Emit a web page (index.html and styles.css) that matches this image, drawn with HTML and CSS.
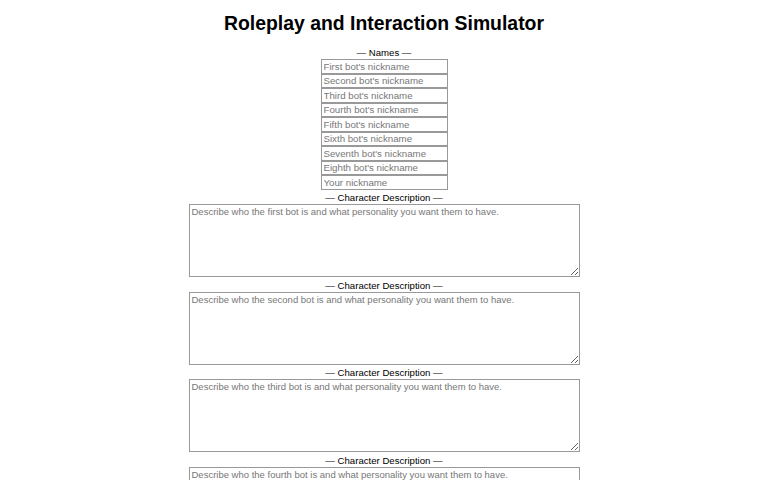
FILE: index.html
```html
<!DOCTYPE html>
<html>
<head>
    <title>Roleplay and Interaction Simulator</title>
    <link rel="stylesheet" href="styles.css">
</head>
<body>
    <h1>Roleplay and Interaction Simulator</h1>
    <div class="form">
        <div class="label">— Names —</div>
        <div class="names">
            <input type="text" placeholder="First bot's nickname">
            <input type="text" placeholder="Second bot's nickname">
            <input type="text" placeholder="Third bot's nickname">
            <input type="text" placeholder="Fourth bot's nickname">
            <input type="text" placeholder="Fifth bot's nickname">
            <input type="text" placeholder="Sixth bot's nickname">
            <input type="text" placeholder="Seventh bot's nickname">
            <input type="text" placeholder="Eighth bot's nickname">
            <input type="text" placeholder="Your nickname">
        </div>
        <div class="label first">— Character Description —</div>
        <textarea placeholder="Describe who the first bot is and what personality you want them to have."></textarea>
        <div class="label">— Character Description —</div>
        <textarea placeholder="Describe who the second bot is and what personality you want them to have."></textarea>
        <div class="label">— Character Description —</div>
        <textarea placeholder="Describe who the third bot is and what personality you want them to have."></textarea>
        <div class="label">— Character Description —</div>
        <textarea placeholder="Describe who the fourth bot is and what personality you want them to have."></textarea>
    </div>
</body>
</html>
```

FILE: styles.css
```css
body {
    font-family: 'Liberation Sans', Arial, sans-serif;
    font-size: 9.6px;
    margin: 0;
    padding: 0;
    color: #000;
    background-color: #fff;
}
h1 {
    font-size: 19.4px;
    text-align: center;
    margin: 11px 0 11.5px 0;
    line-height: 24px;
}
.form {
    display: flex;
    flex-direction: column;
    align-items: center;
}
.label {
    line-height: 12px;
    height: 12px;
}
.label.first {
    margin-top: 2.5px;
}
.names {
    display: flex;
    flex-direction: column;
    margin-top: 0.5px;
}
input[type="text"] {
    box-sizing: border-box;
    width: 127px;
    height: 14.5px;
    margin: 0;
    padding: 0 2px;
    border: 1px solid #999;
    font-family: 'Liberation Sans', Arial, sans-serif;
    font-size: 9.7px;
}
input::placeholder,
textarea::placeholder {
    color: #777;
}
textarea {
    box-sizing: border-box;
    width: 391px;
    height: 73px;
    margin: 0 0 2.5px 0;
    padding: 1px 2px;
    border: 1px solid #999;
    font-family: 'Liberation Sans', Arial, sans-serif;
    font-size: 9.5px;
}
```
